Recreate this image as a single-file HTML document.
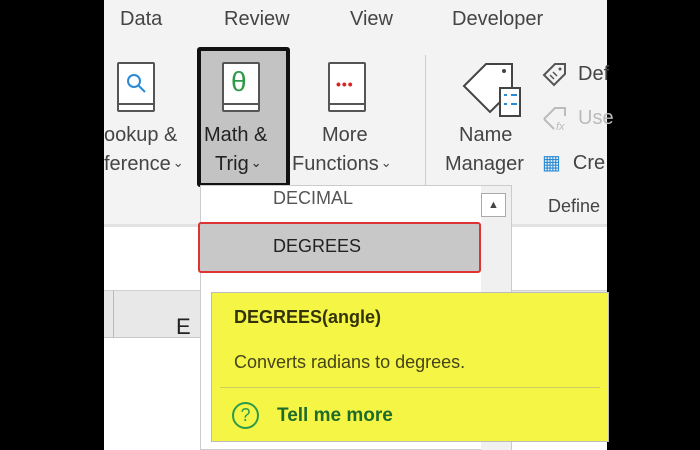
<!DOCTYPE html>
<html><head><style>
*{margin:0;padding:0;box-sizing:border-box}
body{width:700px;height:450px;overflow:hidden;background:#000;position:relative;font-family:"Liberation Sans",sans-serif;color:#333}
.a{position:absolute}
.t{font-size:20px;color:#444}
.ch{font-size:13px;vertical-align:3px;margin-left:2px}
.bk{border:2px solid #555;border-radius:2px;background:#fff}
.bk:after{content:"";position:absolute;left:-2px;right:-2px;bottom:5px;height:2px;background:#555}
</style></head><body>
<div class="a" style="left:104px;top:0;width:503px;height:450px;background:#fff"></div>
<div class="a" style="left:104px;top:0;width:503px;height:224px;background:#f3f3f3"></div>
<div class="a" style="left:104px;top:224px;width:503px;height:3px;background:#e2e2e2"></div>
<div class="a" style="left:104px;top:290px;width:503px;height:48px;background:#e8e8e8;border-top:1px solid #d0d0d0;border-bottom:1px solid #c8c8c8"></div>
<div class="a" style="left:113px;top:290px;width:1px;height:48px;background:#bbb"></div>
<div class="a t" style="left:176px;top:314px;font-size:22px;color:#222">E</div>

<div class="a t" style="left:120px;top:8px">Data</div>
<div class="a t" style="left:224px;top:8px">Review</div>
<div class="a t" style="left:350px;top:8px">View</div>
<div class="a t" style="left:452px;top:8px">Developer</div>

<div class="a" style="left:425px;top:55px;width:1px;height:130px;background:#ccc"></div>

<div class="a bk" style="left:117px;top:62px;width:38px;height:50px"></div>
<svg class="a" style="left:122px;top:70px" width="30" height="30"><circle cx="12" cy="11" r="6" fill="none" stroke="#2a8ad4" stroke-width="2"/><path d="M16 15l7 7" stroke="#2a8ad4" stroke-width="2"/></svg>
<div class="a t" style="left:104px;top:124px">ookup &amp;</div>
<div class="a t" style="left:104px;top:153px">ference<span class="ch">⌄</span></div>

<div class="a" style="left:197px;top:47px;width:93px;height:140px;border:4px solid #111;border-radius:3px;background:#c3c3c3"></div>
<div class="a bk" style="left:222px;top:62px;width:38px;height:50px"></div>
<div class="a" style="left:231px;top:66px;font-size:28px;color:#2e9a4a">θ</div>
<div class="a t" style="left:204px;top:124px;color:#222">Math &amp;</div>
<div class="a t" style="left:215px;top:153px;color:#222">Trig<span class="ch">⌄</span></div>

<div class="a bk" style="left:328px;top:62px;width:38px;height:50px"></div>
<div class="a" style="left:336px;top:76px;font-size:14px;color:#d22;letter-spacing:1px;font-weight:bold">•••</div>
<div class="a t" style="left:322px;top:124px">More</div>
<div class="a t" style="left:292px;top:153px">Functions<span class="ch">⌄</span></div>

<svg class="a" style="left:460px;top:58px" width="62" height="60"><path d="M4 28L26 6h26v26L30 54z" fill="#fff" stroke="#444" stroke-width="2"/><circle cx="44" cy="13" r="2" fill="#444"/><rect x="40" y="30" width="20" height="28" fill="#fff" stroke="#444" stroke-width="2"/><path d="M44 37h3M51 37h6M44 46h3M51 46h6" stroke="#2a8ad4" stroke-width="2"/></svg>
<div class="a t" style="left:459px;top:124px">Name</div>
<div class="a t" style="left:445px;top:153px">Manager</div>
<svg class="a" style="left:542px;top:62px" width="28" height="26"><path d="M2 13L13 2h10v10L12 23z" fill="none" stroke="#555" stroke-width="2"/><circle cx="18" cy="7" r="1.5" fill="#555"/><path d="M8 13l4 4M11 10l4 4" stroke="#555" stroke-width="1.5"/></svg>
<div class="a t" style="left:578px;top:63px">Def</div>
<svg class="a" style="left:542px;top:106px" width="28" height="26"><path d="M2 13L13 2h10v8M12 23L2 13" fill="none" stroke="#bbb" stroke-width="2"/><text x="14" y="24" font-size="11" fill="#bbb" font-style="italic">fx</text></svg>
<div class="a t" style="left:578px;top:107px;color:#bbb">Use</div>
<div class="a t" style="left:542px;top:150px"><span style="color:#2a8ad4">▦</span><span style="margin-left:12px">Cre</span></div>
<div class="a" style="left:548px;top:196px;font-size:18px;color:#444">Define</div>

<div class="a" style="left:200px;top:185px;width:312px;height:265px;background:#fff;border:1px solid #ccc"></div>
<div class="a" style="left:481px;top:186px;width:30px;height:264px;background:#f0f0f0"></div>
<div class="a" style="left:481px;top:193px;width:25px;height:24px;border:1px solid #aaa;background:#fff;font-size:11px;text-align:center;line-height:22px;color:#444">▲</div>
<div class="a" style="left:273px;top:188px;font-size:18px;color:#555">DECIMAL</div>
<div class="a" style="left:198px;top:222px;width:283px;height:51px;background:#c8c8c8;border:2px solid #d33;border-radius:3px"></div>
<div class="a" style="left:273px;top:236px;font-size:18px;color:#222">DEGREES</div>

<div class="a" style="left:211px;top:292px;width:398px;height:150px;background:#f5f545;border:1px solid #bbb"></div>
<div class="a" style="left:234px;top:307px;font-size:18px;font-weight:bold;color:#33330a">DEGREES(angle)</div>
<div class="a" style="left:234px;top:352px;font-size:18px;color:#44441a">Converts radians to degrees.</div>
<div class="a" style="left:220px;top:387px;width:380px;height:1px;background:#cdcd6a"></div>
<div class="a" style="left:232px;top:402px;width:27px;height:27px;border:2px solid #2e9a4a;border-radius:50%;color:#2e9a4a;font-size:18px;text-align:center;line-height:23px">?</div>
<div class="a" style="left:277px;top:405px;font-size:19px;font-weight:bold;color:#1f6b2a">Tell me more</div>
</body></html>
